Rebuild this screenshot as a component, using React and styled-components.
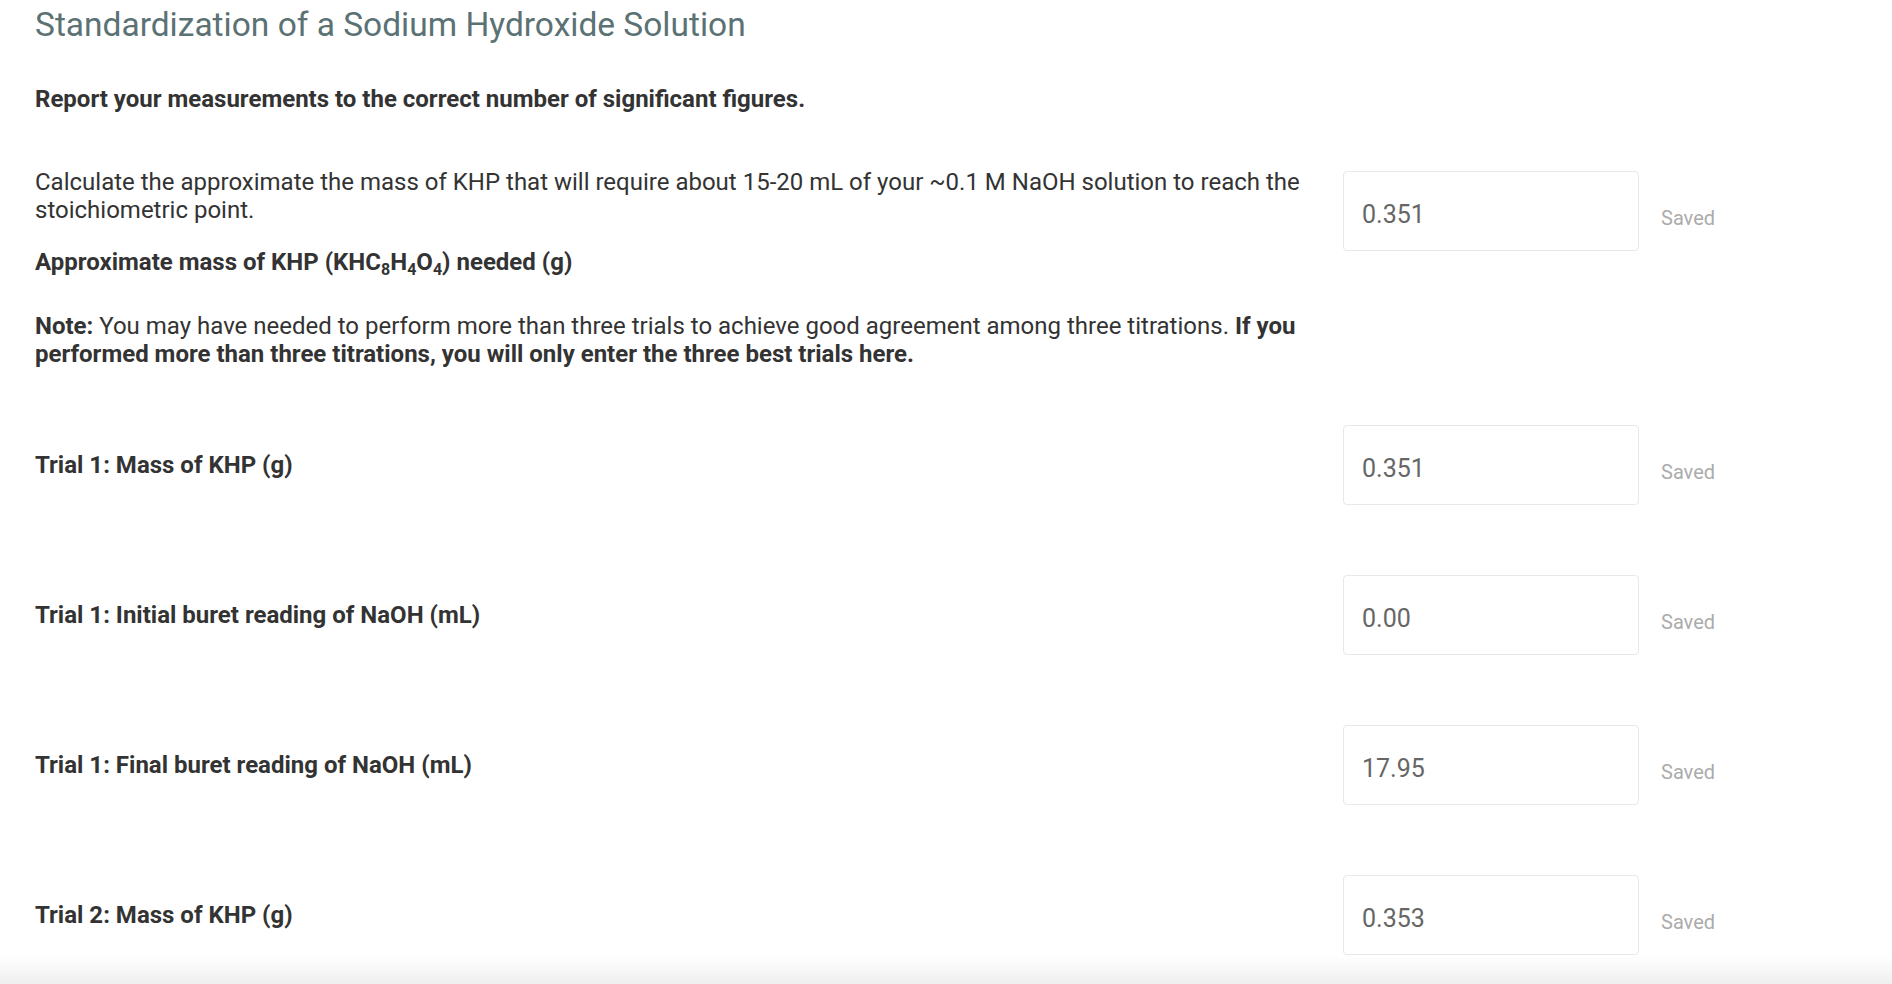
import React from 'react';
import styled, { createGlobalStyle } from 'styled-components';

const GlobalStyle = createGlobalStyle`
  html, body {
    margin: 0;
    padding: 0;
    background: #ffffff;
    font-family: Roboto, "Liberation Sans", Arial, sans-serif;
    color: #333333;
  }
`;

const trials = [
  { label: 'Trial 1: Mass of KHP (g)', value: '0.351' },
  { label: 'Trial 1: Initial buret reading of NaOH (mL)', value: '0.00' },
  { label: 'Trial 1: Final buret reading of NaOH (mL)', value: '17.95' },
  { label: 'Trial 2: Mass of KHP (g)', value: '0.353' },
];

export default function App() {
  return (
    <>
      <GlobalStyle />
      <Page>
        <Title>Standardization of a Sodium Hydroxide Solution</Title>
        <Instruction>Report your measurements to the correct number of significant figures.</Instruction>

        <QuestionRow>
          <LeftCol>
            <Paragraph>
              Calculate the approximate the mass of KHP that will require about 15-20 mL of your ~0.1 M NaOH
              solution to reach the stoichiometric point.
            </Paragraph>
            <FieldLabel $top={24}>
              Approximate mass of KHP (KHC<sub>8</sub>H<sub>4</sub>O<sub>4</sub>) needed (g)
            </FieldLabel>
          </LeftCol>
          <Answer value="0.351" $offset={3} />
        </QuestionRow>

        <Note>
          <b>Note:</b> You may have needed to perform more than three trials to achieve good agreement among three
          titrations. <b>If you performed more than three titrations, you will only enter the three best trials here.</b>
        </Note>

        <Trials>
          {trials.map((t, i) => (
            <TrialRow key={i}>
              <FieldLabel>{t.label}</FieldLabel>
              <Answer value={t.value} />
            </TrialRow>
          ))}
        </Trials>
      </Page>
      <BottomFade />
    </>
  );
}

function Answer({ value, $offset }) {
  return (
    <AnswerCell $offset={$offset}>
      <InputBox type="text" defaultValue={value} />
      <SavedText>Saved</SavedText>
    </AnswerCell>
  );
}

const Page = styled.div`
  padding: 5px 35px 40px 35px;
`;

const Title = styled.h1`
  margin: 0;
  font-size: 33.5px;
  line-height: 40px;
  font-weight: 400;
  color: #5b7274;
`;

const Instruction = styled.p`
  margin: 40px 0 0 0;
  font-size: 24px;
  line-height: 28px;
  font-weight: 700;
  color: #333;
`;

const QuestionRow = styled.div`
  display: grid;
  grid-template-columns: 1300px auto;
  column-gap: 8px;
  align-items: start;
  margin-top: 55px;
`;

const LeftCol = styled.div`
  display: flex;
  flex-direction: column;
`;

const Paragraph = styled.p`
  margin: 0;
  font-size: 24px;
  line-height: 28px;
  color: #333;
`;

const FieldLabel = styled.div`
  margin-top: ${p => p.$top || 0}px;
  font-size: 24px;
  line-height: 28px;
  font-weight: 700;
  color: #333;

  sub {
    font-size: 16px;
    line-height: 0;
    vertical-align: -5px;
  }
`;

const Note = styled.p`
  margin: 36px 0 0 0;
  width: 1300px;
  font-size: 24px;
  line-height: 28px;
  color: #333;
`;

const Trials = styled.div`
  display: flex;
  flex-direction: column;
  gap: 70px;
  margin-top: 57px;
`;

const TrialRow = styled.div`
  display: grid;
  grid-template-columns: 1300px auto;
  column-gap: 8px;
  align-items: center;
`;

const AnswerCell = styled.div`
  display: flex;
  align-items: center;
  gap: 22px;
  margin-top: ${p => p.$offset || 0}px;
`;

const InputBox = styled.input`
  box-sizing: border-box;
  width: 296px;
  height: 80px;
  padding: 6px 18px 0 18px;
  border: 1px solid #e8e8e8;
  border-radius: 4px;
  background: #fff;
  font-family: Roboto, "Liberation Sans", Arial, sans-serif;
  font-size: 25px;
  color: #666;
  outline: none;
`;

const SavedText = styled.span`
  padding-top: 14px;
  font-size: 20px;
  color: #ababab;
`;

const BottomFade = styled.div`
  position: fixed;
  left: 0;
  right: 0;
  bottom: 0;
  height: 28px;
  background: linear-gradient(to bottom, rgba(240, 240, 240, 0), #efefef);
  pointer-events: none;
`;
